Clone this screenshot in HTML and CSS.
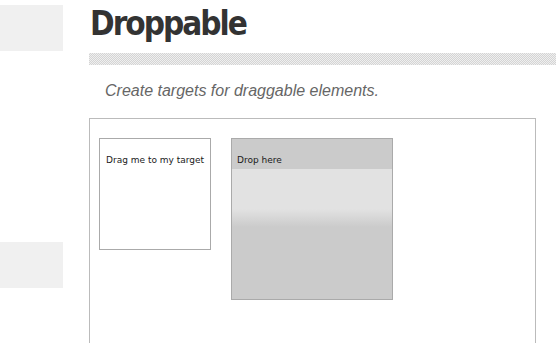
FILE: index.html
```html
<!DOCTYPE html>
<html>
<head>
<meta charset="utf-8">
<link rel="stylesheet" href="styles.css">
</head>
<body>
<div class="page">
  <aside class="sidebar">
    <div class="side-box side-box-top"></div>
    <div class="side-box side-box-bottom"></div>
  </aside>
  <main class="content">
    <h1 class="title">Droppable</h1>
    <div class="rule"></div>
    <p class="desc">Create targets for draggable elements.</p>
    <div class="demo">
      <div class="draggable"><p>Drag me to my target</p></div>
      <div class="droppable"><p>Drop here</p></div>
    </div>
  </main>
</div>
</body>
</html>
```
FILE: styles.css
```css
html, body {
  margin: 0;
  padding: 0;
  background: #fff;
  overflow: hidden;
}
.page {
  display: flex;
  width: 556px;
  height: 343px;
  overflow: hidden;
}
.sidebar {
  width: 63px;
  flex: none;
  padding-top: 5px;
}
.side-box {
  height: 46px;
  background: #f0f0f0;
}
.side-box-bottom {
  margin-top: 191px;
}
.content {
  margin-left: 26px;
  flex: 1;
  min-width: 0;
}
.title {
  margin: 0;
  padding-left: 1px;
  font-family: "DejaVu Sans Condensed", "DejaVu Sans", sans-serif;
  font-weight: bold;
  font-size: 33px;
  line-height: 47px;
  height: 53px;
  color: #333;
  letter-spacing: -2px;
}
.rule {
  height: 12px;
  background: repeating-conic-gradient(#d4d4d4 0 25%, #efefef 0 50%) 0 0 / 2px 2px;
}
.desc {
  margin: 0;
  padding: 16px 0 0 16px;
  height: 37px;
  font-family: "Liberation Sans", Arial, sans-serif;
  font-style: italic;
  font-size: 16px;
  line-height: 20px;
  color: #666;
}
.demo {
  width: 436px;
  height: 260px;
  border: 1px solid #bbb;
  display: flex;
  align-items: flex-start;
  padding: 19px 0 0 9px;
  gap: 20px;
  font-family: "DejaVu Sans", sans-serif;
  font-size: 9px;
  color: #1a1a1a;
}
.draggable {
  width: 110px;
  height: 110px;
  border: 1px solid #aaa;
  background: #fff;
}
.draggable p {
  margin: 16px 0 0 6px;
}
.droppable {
  width: 160px;
  height: 160px;
  border: 1px solid #aaa;
  background: linear-gradient(to bottom, #cbcbcb 0, #cbcbcb 30px, #e2e2e2 30px, #e2e2e2 70px, #cbcbcb 88px, #cbcbcb 100%);
  color: #1a1a1a;
}
.droppable p {
  margin: 16px 0 0 5px;
}
```
